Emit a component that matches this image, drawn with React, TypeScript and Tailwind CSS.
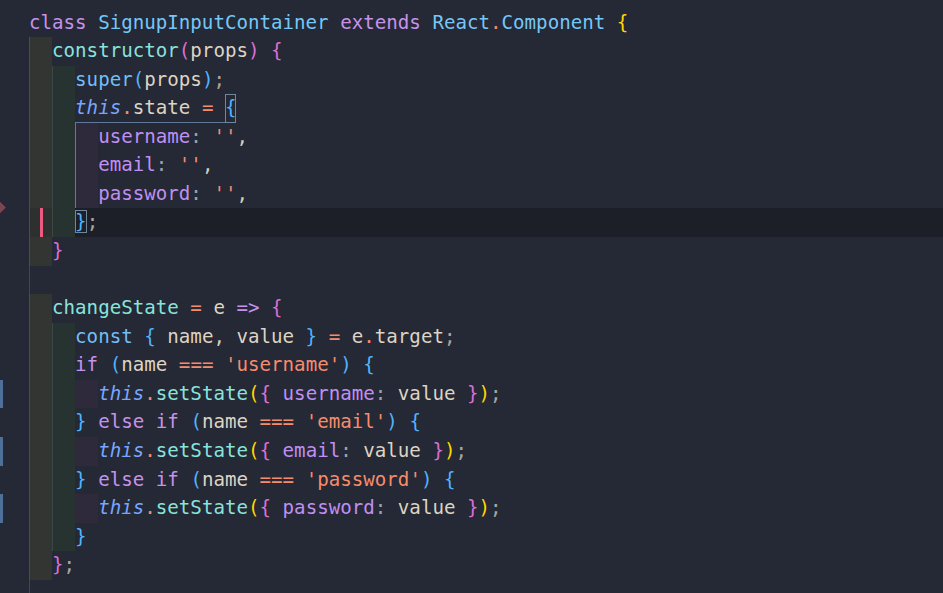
import React from "react";

const KW = "text-[#c792ea]";
const PROP = "text-[#c08ff2]";
const FN = "text-[#88e3dc]";
const CLS = "text-[#74c7f7]";
const TXT = "text-[#ddd4c3]";
const OP = "text-[#f78c6c]";
const STR = "text-[#f78c6c]";
const THIS = "text-[#78a6ff] italic";
const BKW = "text-[#72bff6]";
const PUN = "text-[#9aa2ad]";
const COMMA = "text-[#d8cfb8]";
const SEMI = "text-[#aaa79c]";
const B1 = "text-[#ffd700]";
const B2 = "text-[#da70d6]";
const B3 = "text-[#4fb3ff]";

function C({ c, children }: { c: string; children: React.ReactNode }) {
  return <span className={c}>{children}</span>;
}

const G = () => <span className="relative w-[2ch] shrink-0 border-l border-[#4a4d50] bg-[#323531]" />;
const GP = () => (
  <span className="relative w-[2ch] shrink-0 border-l border-[#4a4d50] bg-[#2e302f]">
    <span className="absolute left-[10px] top-0 h-full w-[3px] bg-[#ec5a82]" />
  </span>
);
const N = () => <span className="w-[2ch] shrink-0 border-l border-[#3a4845] bg-[#273330]" />;
const P = () => <span className="w-[2ch] shrink-0 bg-[#2f2a3b]" />;
const PB = () => <span className="w-[2ch] shrink-0 border-l border-[#60799a] bg-[#2f2a3b]" />;
const Guide = () => <span className="w-[2ch] shrink-0 border-l border-[#43464b]" />;

function Line({
  ind,
  active,
  mark,
  children,
}: {
  ind?: React.ReactNode;
  active?: boolean;
  mark?: "blue" | "red";
  children?: React.ReactNode;
}) {
  return (
    <div className="relative flex h-[28.57px]">
      <div className="relative w-[29px] shrink-0">
        {mark === "blue" && <span className="absolute left-0 top-0 h-full w-[3px] bg-[#4d6f99]" />}
        {mark === "red" && (
          <span className="absolute left-[-5px] top-[-5px] h-[9px] w-[9px] rotate-45 bg-[#7c4553]" />
        )}
      </div>
      <div className={active ? "flex flex-1 whitespace-pre leading-[28.57px] bg-[#1c1f27]" : "flex flex-1 whitespace-pre leading-[28.57px]"}>
        {ind}
        <span className="whitespace-pre">{children}</span>
      </div>
    </div>
  );
}

function SetState({ prop }: { prop: string }) {
  return (
    <>
      <C c={THIS}>this</C>
      <C c={OP}>.</C>
      <C c={FN}>setState</C>
      <C c={B1}>(</C>
      <C c={B2}>{"{"}</C>
      {" "}
      <C c={PROP}>{prop}</C>
      <C c={PUN}>:</C>
      <C c={TXT}> value </C>
      <C c={B2}>{"}"}</C>
      <C c={B1}>)</C>
      <C c={SEMI}>;</C>
    </>
  );
}

function ElseIf({ str }: { str: string }) {
  return (
    <>
      <C c={B3}>{"}"}</C> <C c={KW}>else</C> <C c={KW}>if</C> <C c={B3}>(</C>
      <C c={TXT}>name</C> <C c={OP}>===</C> <C c={STR}>{`'${str}'`}</C>
      <C c={B3}>)</C> <C c={B3}>{"{"}</C>
    </>
  );
}

export default function App() {
  return (
    <div className="h-[593px] w-full overflow-hidden bg-[#252835] pt-[8.5px] font-['DejaVu_Sans_Mono',monospace] text-[19.15px] text-[#ddd4c3]">
      <Line>
        <C c={KW}>class</C> <C c={CLS}>SignupInputContainer</C> <C c={KW}>extends</C> <C c={CLS}>React</C>
        <C c={OP}>.</C>
        <C c={CLS}>Component</C> <C c={B1}>{"{"}</C>
      </Line>
      <Line ind={<G />}>
        <C c={FN}>constructor</C>
        <C c={B2}>(</C>
        <C c={TXT}>props</C>
        <C c={B2}>)</C> <C c={B2}>{"{"}</C>
      </Line>
      <Line ind={<><G /><N /></>}>
        <C c={BKW}>super</C>
        <C c={B3}>(</C>
        <C c={TXT}>props</C>
        <C c={B3}>)</C>
        <C c={SEMI}>;</C>
      </Line>
      <div className="relative flex h-[28.57px]">
        <div className="w-[29px] shrink-0" />
        <div className="flex flex-1 whitespace-pre leading-[28.57px]">
          <G />
          <N />
          <span className="border-b border-[#60799a] whitespace-pre">
            <C c={THIS}>this</C>
            <C c={OP}>.</C>
            <C c={TXT}>state</C> <C c={OP}>=</C>{" "}
          </span>
          <span className="text-[#4fb3ff] shadow-[inset_0_0_0_1px_#71859b]">{"{"}</span>
        </div>
      </div>
      <Line ind={<><G /><N /><PB /></>}>
        <C c={PROP}>username</C>
        <C c={PUN}>:</C> <C c={STR}>''</C>
        <C c={COMMA}>,</C>
      </Line>
      <Line ind={<><G /><N /><PB /></>}>
        <C c={PROP}>email</C>
        <C c={PUN}>:</C> <C c={STR}>''</C>
        <C c={COMMA}>,</C>
      </Line>
      <Line ind={<><G /><N /><PB /></>}>
        <C c={PROP}>password</C>
        <C c={PUN}>:</C> <C c={STR}>''</C>
        <C c={COMMA}>,</C>
      </Line>
      <Line active mark="red" ind={<><GP /><N /></>}>
        <span className="text-[#4fb3ff] shadow-[inset_0_0_0_1px_#71859b]">{"}"}</span>
        <C c={SEMI}>;</C>
      </Line>
      <Line ind={<G />}>
        <C c={B2}>{"}"}</C>
      </Line>
      <Line ind={<Guide />} />
      <Line ind={<G />}>
        <C c={FN}>changeState</C> <C c={OP}>=</C> <C c={TXT}>e</C> <C c={KW}>=&gt;</C> <C c={B2}>{"{"}</C>
      </Line>
      <Line ind={<><G /><N /></>}>
        <C c={BKW}>const</C> <C c={B3}>{"{"}</C>
        <C c={TXT}> name</C>
        <C c={COMMA}>,</C>
        <C c={TXT}> value </C>
        <C c={B3}>{"}"}</C> <C c={OP}>=</C> <C c={TXT}>e</C>
        <C c={OP}>.</C>
        <C c={TXT}>target</C>
        <C c={SEMI}>;</C>
      </Line>
      <Line ind={<><G /><N /></>}>
        <C c={KW}>if</C> <C c={B3}>(</C>
        <C c={TXT}>name</C> <C c={OP}>===</C> <C c={STR}>'username'</C>
        <C c={B3}>)</C> <C c={B3}>{"{"}</C>
      </Line>
      <Line mark="blue" ind={<><G /><N /><P /></>}>
        <SetState prop="username" />
      </Line>
      <Line ind={<><G /><N /></>}>
        <ElseIf str="email" />
      </Line>
      <Line mark="blue" ind={<><G /><N /><P /></>}>
        <SetState prop="email" />
      </Line>
      <Line ind={<><G /><N /></>}>
        <ElseIf str="password" />
      </Line>
      <Line mark="blue" ind={<><G /><N /><P /></>}>
        <SetState prop="password" />
      </Line>
      <Line ind={<><G /><N /></>}>
        <C c={B3}>{"}"}</C>
      </Line>
      <Line ind={<G />}>
        <C c={B2}>{"}"}</C>
        <C c={SEMI}>;</C>
      </Line>
      <Line ind={<Guide />} />
    </div>
  );
}
